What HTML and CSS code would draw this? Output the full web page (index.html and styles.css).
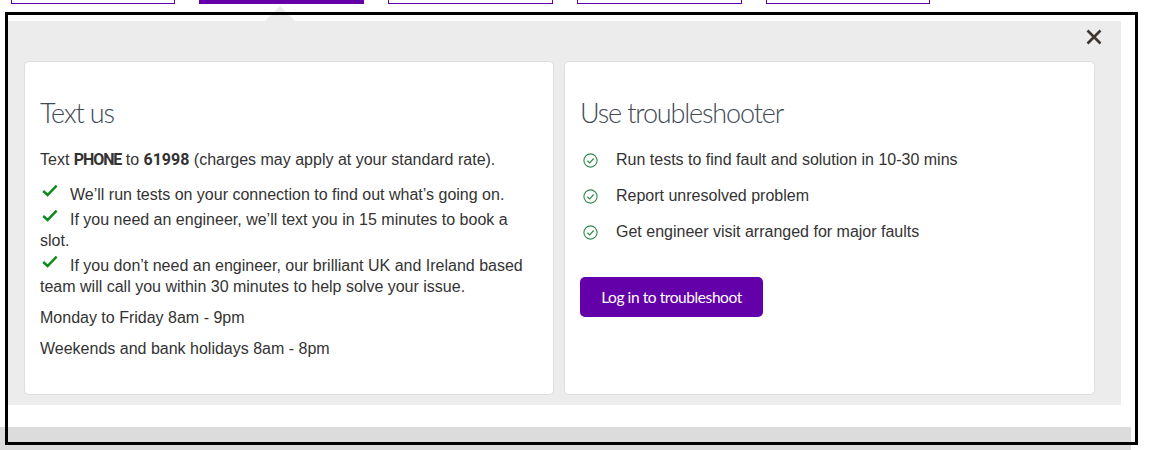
FILE: index.html
```html
<!DOCTYPE html>
<html lang="en">
<head>
<meta charset="utf-8">
<title>Text us or use troubleshooter</title>
<link rel="stylesheet" href="styles.css">
</head>
<body>
<div class="page">
  <nav class="tabs">
    <span class="tab"></span>
    <span class="tab tab-active"></span>
    <span class="tab"></span>
    <span class="tab"></span>
    <span class="tab tab-last"></span>
  </nav>
  <section class="panel">
    <span class="arrow"></span>
    <div class="panel-top">
      <svg class="close" width="16" height="16" viewBox="0 0 16 16" aria-label="Close"><path d="M1.5 1.5 14.5 14.5M14.5 1.5 1.5 14.5" fill="none" stroke="#3c3530" stroke-width="2.6"/></svg>
    </div>
    <div class="cards">
      <article class="card card-left">
        <h2>Text us</h2>
        <p class="intro">Text <b class="word">PHONE</b> to <b>61998</b> (charges may apply at your standard rate).</p>
        <p class="tick-line first"><svg class="tick" width="16" height="13" viewBox="0 0 16 13"><path d="M1.2 7 5.6 11 14.6 1.6" fill="none" stroke="#0a8a1a" stroke-width="2.4"/></svg>We’ll run tests on your connection to find out what’s going on.</p>
        <p class="tick-line"><svg class="tick" width="16" height="13" viewBox="0 0 16 13"><path d="M1.2 7 5.6 11 14.6 1.6" fill="none" stroke="#0a8a1a" stroke-width="2.4"/></svg>If you need an engineer, we’ll text you in 15 minutes to book a slot.</p>
        <p class="tick-line"><svg class="tick" width="16" height="13" viewBox="0 0 16 13"><path d="M1.2 7 5.6 11 14.6 1.6" fill="none" stroke="#0a8a1a" stroke-width="2.4"/></svg>If you don’t need an engineer, our brilliant UK and Ireland based team will call you within 30 minutes to help solve your issue.</p>
        <p class="hours">Monday to Friday 8am - 9pm</p>
        <p class="hours">Weekends and bank holidays 8am - 8pm</p>
      </article>
      <article class="card card-right">
        <h2>Use troubleshooter</h2>
        <ul class="checks">
          <li><svg class="circle" width="15" height="15" viewBox="0 0 15 15"><circle cx="7.5" cy="7.5" r="6.6" fill="none" stroke="#2e8b4a" stroke-width="1.1"/><path d="M4.4 7.7 6.7 9.9 10.7 5.5" fill="none" stroke="#2e8b4a" stroke-width="1.2"/></svg>Run tests to find fault and solution in 10-30 mins</li>
          <li><svg class="circle" width="15" height="15" viewBox="0 0 15 15"><circle cx="7.5" cy="7.5" r="6.6" fill="none" stroke="#2e8b4a" stroke-width="1.1"/><path d="M4.4 7.7 6.7 9.9 10.7 5.5" fill="none" stroke="#2e8b4a" stroke-width="1.2"/></svg>Report unresolved problem</li>
          <li><svg class="circle" width="15" height="15" viewBox="0 0 15 15"><circle cx="7.5" cy="7.5" r="6.6" fill="none" stroke="#2e8b4a" stroke-width="1.1"/><path d="M4.4 7.7 6.7 9.9 10.7 5.5" fill="none" stroke="#2e8b4a" stroke-width="1.2"/></svg>Get engineer visit arranged for major faults</li>
        </ul>
        <a class="button" href="#">Log in to troubleshoot</a>
      </article>
    </div>
  </section>
  <div class="band"></div>
  <div class="frame"></div>
</div>
</body>
</html>
```
FILE: styles.css
```css
* { box-sizing: border-box; }
html, body { margin: 0; padding: 0; background: #fff; }
body { font-family: "Liberation Sans", Arial, sans-serif; color: #333; font-size: 16px; }
.page { position: relative; width: 1163px; height: 450px; overflow: hidden; }

.tabs { display: flex; gap: 24.35px; height: 4px; padding-left: 10.6px; }
.tab { width: 164.5px; height: 4px; border: 1px solid #6400aa; border-top: 0; background: #fff; }
.tab-active { background: #6400aa; }
.tab-last { width: 164px; }

.panel { position: relative; width: 1113px; height: 384px; margin: 17px 0 0 8px; background: #ececec; padding: 0 26px 0 16px; }
.arrow { position: absolute; left: 257px; top: -15px; width: 30px; height: 15px; background: #ececec; clip-path: polygon(50% 0, 100% 100%, 0 100%); }
.panel-top { height: 40px; display: flex; justify-content: flex-end; padding: 8px 0 0; }
.close { margin-right: -7px; }

.cards { display: flex; gap: 10px; height: 334px; }
.card { flex: 1 1 0; background: #fff; border: 1px solid #dedede; border-radius: 5px; }
.card-left { padding: 35px 15px 0; }
.card-right { padding: 35px 16px 0 15px; }
h2 { margin: 0; font-family: Lato, "Open Sans", sans-serif; font-weight: 300; font-size: 27px; line-height: 31px; letter-spacing: -1.15px; color: #3f4a55; }

p { margin: 0; line-height: 20px; }
b { font-family: Roboto, sans-serif; font-weight: 700; font-size: 16px; }
.word { letter-spacing: -1.1px; }
.intro { margin-top: 22px; }
.tick-line { line-height: 21px; margin-top: 4px; }
.first { margin-top: 14px; }
.tick { margin: 0 12px 0 2px; vertical-align: 3px; }
.hours { margin-top: 11px; }

.checks { list-style: none; margin: 22px 0 0; padding: 0; }
.checks li { display: flex; align-items: center; height: 20px; margin-bottom: 16px; }
.circle { margin-right: 18px; margin-left: 3px; flex: none; }
.button { display: inline-flex; align-items: center; justify-content: center; width: 183px; height: 40px; margin-top: 19px; background: #6400aa; border-radius: 5px; color: #fff; text-decoration: none; font-family: Lato, "Open Sans", sans-serif; font-size: 15.5px; letter-spacing: -0.42px; }

.band { width: 1131px; height: 23px; margin-top: 22px; background: #dcdcdc; }
.frame { position: absolute; left: 5px; top: 12px; width: 1133px; height: 433px; border: 3px solid #000; pointer-events: none; }
```
